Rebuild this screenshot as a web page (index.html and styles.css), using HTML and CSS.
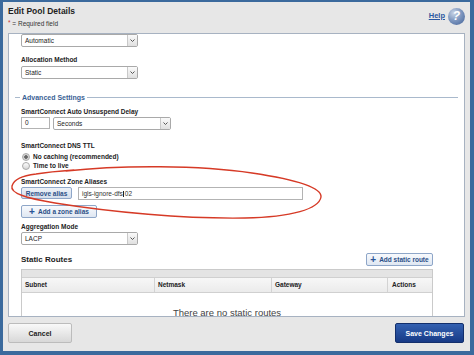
FILE: index.html
```html
<!DOCTYPE html>
<html lang="en">
<head>
<meta charset="UTF-8">
<meta name="viewport" content="width=device-width, initial-scale=1.0">
<title>Edit Pool Details</title>
<link rel="stylesheet" href="styles.css">
</head>
<body>
<div class="dialog">
  <div class="dlg-head">
    <div>
      <h1>Edit Pool Details</h1>
      <p class="req"><span>*</span> = Required field</p>
    </div>
    <a class="help" href="#">Help</a>
    <span class="help-icon">?</span>
  </div>

  <div class="dlg-body">
    <div class="form">
      <div class="select first"><span>Automatic</span><i><svg width="5" height="3" viewBox="0 0 5 3"><path d="M0.5 0.5 L2.5 2.5 L4.5 0.5" fill="none" stroke="#555" stroke-width="1"/></svg></i></div>

      <label class="lbl">Allocation Method</label>
      <div class="select"><span>Static</span><i><svg width="5" height="3" viewBox="0 0 5 3"><path d="M0.5 0.5 L2.5 2.5 L4.5 0.5" fill="none" stroke="#555" stroke-width="1"/></svg></i></div>

      <div class="legend"><b class="ln short"></b><span>Advanced Settings</span><b class="ln"></b></div>

      <label class="lbl">SmartConnect Auto Unsuspend Delay</label>
      <div class="row">
        <div class="input num">0</div>
        <div class="select wide"><span>Seconds</span><i><svg width="5" height="3" viewBox="0 0 5 3"><path d="M0.5 0.5 L2.5 2.5 L4.5 0.5" fill="none" stroke="#555" stroke-width="1"/></svg></i></div>
      </div>

      <label class="lbl ttl">SmartConnect DNS TTL</label>
      <div class="radio on"><i></i>No caching (recommended)</div>
      <div class="radio"><i></i>Time to live</div>

      <label class="lbl zones">SmartConnect Zone Aliases</label>
      <div class="row">
        <button class="btn-sm remove">Remove alias</button>
        <div class="input alias">igls-ignore-dfs<span class="caret"></span>02</div>
      </div>
      <button class="btn-sm add-zone"><b class="plus">+</b>Add a zone alias</button>

      <label class="lbl agg">Aggregation Mode</label>
      <div class="select"><span>LACP</span><i><svg width="5" height="3" viewBox="0 0 5 3"><path d="M0.5 0.5 L2.5 2.5 L4.5 0.5" fill="none" stroke="#555" stroke-width="1"/></svg></i></div>

      <div class="routes">
        <div class="routes-head">
          <h2>Static Routes</h2>
          <button class="btn-sm add-route"><b class="plus">+</b>Add static route</button>
        </div>
        <div class="table">
          <div class="band"></div>
          <div class="cols">
            <div class="c1">Subnet</div>
            <div class="c2">Netmask</div>
            <div class="c3">Gateway</div>
            <div class="c4">Actions</div>
          </div>
          <div class="empty">There are no static routes</div>
        </div>
      </div>
    </div>
  </div>

  <div class="dlg-foot">
    <button class="btn cancel">Cancel</button>
    <button class="btn save">Save Changes</button>
  </div>
</div>

<svg class="markup" width="474" height="355" viewBox="0 0 474 355">
  <path d="M66 171 C120 165 200 165 252 173 C292 179 322 187 321 197 C319 209 292 217 245 218 C185 219 110 212 55 203 C25 198 10 193 12 186 C14 179 22 176 36 174 C48 172 60 171 74 170" fill="none" stroke="#d63a26" stroke-width="1.4" stroke-linecap="round"/>
</svg>
</body>
</html>
```

FILE: styles.css
```css
body {
    margin: 0;
    width: 474px;
    height: 355px;
    overflow: hidden;
    background: #3b6a9d;
    font-family: "Liberation Sans", Arial, sans-serif;
    font-size: 6.5px;
    color: #222;
    position: relative;
}
.dialog {
    margin: 2px 0 0 3px;
    width: 467px;
    height: 349px;
    background: #e7e7e7;
    display: flex;
    flex-direction: column;
}
.dlg-head {
    height: 31px;
    display: flex;
    align-items: flex-start;
    padding: 0 5px;
    box-sizing: border-box;
}
.dlg-head > div {
    flex: 1;
}
.dlg-head h1 {
    margin: 4px 0 0;
    font-size: 8.5px;
    line-height: 10px;
    color: #1e1e1e;
}
.req {
    margin: 4px 0 0;
    font-size: 6.5px;
    color: #333;
}
.req span {
    color: #c33;
    position: relative;
    top: -1px;
}
.help {
    margin-top: 9px;
    font-size: 7.5px;
    font-weight: bold;
    color: #2a57a0;
    text-decoration: underline;
}
.help-icon {
    margin: 6px 0 0 3px;
    width: 17px;
    height: 17px;
    border-radius: 50%;
    background: radial-gradient(circle at 35% 30%, #c9d5e6 0%, #7f98c0 45%, #3f5f96 100%);
    color: #fff;
    font-weight: bold;
    font-style: italic;
    font-size: 12px;
    line-height: 17px;
    text-align: center;
}
.dlg-body {
    margin: 0 5px;
    height: 284px;
    border: 1px solid #a7b2c1;
    background: #fff;
    overflow: hidden;
    box-sizing: border-box;
}
.form {
    padding: 0 12px;
}
.lbl {
    display: block;
    font-weight: bold;
    line-height: 9px;
    margin-top: 8px;
    margin-bottom: 2px;
}
.select {
    display: flex;
    width: 117px;
    height: 13px;
    border: 1px solid #a9a9a9;
    border-radius: 2px;
    box-sizing: border-box;
    background: #fff;
}
.select span {
    flex: 1;
    padding-left: 3px;
    line-height: 11px;
}
.select i {
    width: 9px;
    border-left: 1px solid #c9c9c9;
    background: linear-gradient(#fafafa, #e0e0e0);
    display: flex;
    align-items: center;
    justify-content: center;
}
.select.wide {
    width: 118px;
}
.legend {
    display: flex;
    align-items: center;
    margin: 14px -6px 0;
    height: 9px;
}
.legend .ln {
    flex: 1;
    height: 1px;
    background: #a9b9cc;
}
.legend .ln.short {
    flex: none;
    width: 5px;
}
.legend span {
    padding: 0 2px;
    color: #3a5f95;
    font-weight: bold;
    font-size: 7px;
}
.legend + .lbl {
    margin-top: 5px;
    margin-bottom: 1px;
}
.row {
    display: flex;
    gap: 3px;
}
.input {
    height: 12px;
    border: 1px solid #b3b3b3;
    box-sizing: border-box;
    background: #fff;
    line-height: 10px;
    padding-left: 3px;
}
.input.num {
    width: 29px;
}
.lbl.ttl {
    margin-top: 11px;
}
.radio {
    display: flex;
    align-items: center;
    height: 9px;
    font-weight: bold;
}
.lbl.ttl + .radio {
    margin-top: 2px;
}
.radio i {
    width: 6px;
    height: 6px;
    margin: 0 3px 0 1px;
    border: 1px solid #a9a9a9;
    border-radius: 50%;
    background: linear-gradient(#fdfdfd, #d6d6d6);
}
.radio.on i {
    background: radial-gradient(circle, #666 0 1.5px, #cfcfcf 2px, #e9e9e9 100%);
}
.lbl.zones {
    margin-top: 7px;
    margin-bottom: 1px;
}
.btn-sm {
    height: 13px;
    padding: 0;
    border: 1px solid #8ea6c8;
    border-radius: 2px;
    background: linear-gradient(#f8fafd, #dfe7f2);
    color: #2b4f87;
    font-family: inherit;
    font-size: 6.5px;
    font-weight: bold;
    white-space: nowrap;
    display: flex;
    align-items: center;
    justify-content: center;
    box-sizing: border-box;
}
.btn-sm.remove {
    width: 51px;
    height: 12px;
    background: linear-gradient(#eef2f8, #d3ddeb);
}
.input.alias {
    margin-left: 3px;
    width: 225px;
    height: 13px;
    line-height: 11px;
    color: #333;
}
.caret {
    display: inline-block;
    width: 1px;
    height: 6px;
    background: #222;
    margin: 0 1px -1px 0;
}
.plus {
    font-size: 10px;
    line-height: 8px;
    margin-right: 3px;
    color: #2b5597;
}
.btn-sm.add-zone {
    margin-top: 5px;
    width: 76px;
}
.lbl.agg {
    margin-top: 4px;
    margin-bottom: 1px;
}
.routes {
    width: 412px;
    margin-top: 8px;
}
.routes-head {
    display: flex;
    align-items: center;
    justify-content: space-between;
}
.routes-head h2 {
    margin: 0;
    font-size: 8px;
}
.btn-sm.add-route {
    width: 67px;
}
.table {
    margin-top: 3px;
    border: 1px solid #cacaca;
    border-bottom: none;
}
.band {
    height: 7px;
    background: #e4e4e4;
}
.cols {
    display: flex;
    height: 14px;
    border-top: 1px solid #d0d0d0;
    border-bottom: 1px solid #d0d0d0;
    background: linear-gradient(#f7f7f7, #ebebeb);
    font-weight: bold;
    line-height: 14px;
}
.cols > div {
    padding-left: 3px;
    box-sizing: border-box;
    border-right: 1px solid #d3d3d3;
}
.cols .c1 { width: 133px; }
.cols .c2 { width: 117px; }
.cols .c3 { width: 116px; }
.cols .c4 { flex: 1; border-right: none; padding-left: 4px; }
.empty {
    padding-top: 14px;
    height: 40px;
    text-align: center;
    font-size: 9.5px;
    line-height: 11px;
    color: #444;
}
.dlg-foot {
    flex: 1;
    display: flex;
    justify-content: space-between;
    align-items: flex-start;
    padding: 6px 6px 0 5px;
}
.btn {
    height: 20px;
    border-radius: 2px;
    font-family: inherit;
    font-size: 7px;
    font-weight: bold;
}
.cancel {
    width: 64px;
    border: 1px solid #bcbcbc;
    background: linear-gradient(#f9f9f9, #d8d8d8);
    color: #222;
}
.save {
    width: 69px;
    border: 1px solid #132f6c;
    background: linear-gradient(#3461b1, #173a86);
    color: #fff;
}
.markup {
    position: absolute;
    left: 0;
    top: 0;
    pointer-events: none;
}
```
